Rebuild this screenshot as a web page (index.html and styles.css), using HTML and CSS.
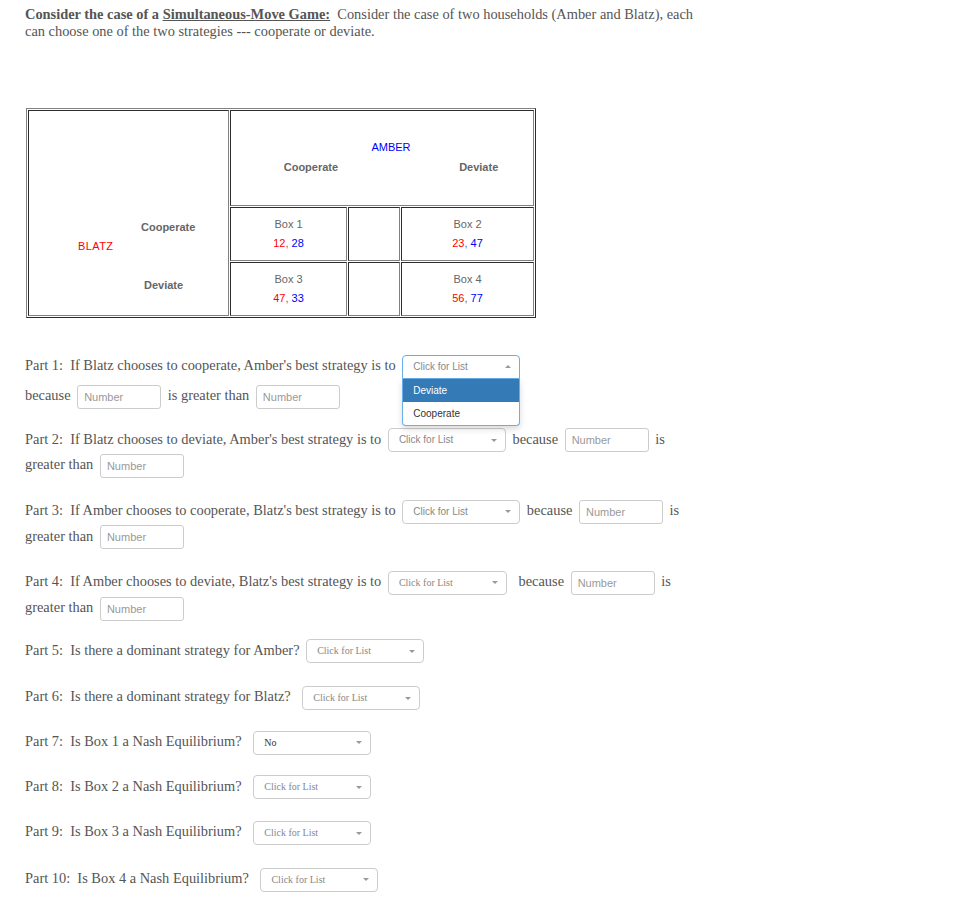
FILE: index.html
```html
<!DOCTYPE html>
<html>
<head>
<meta charset="utf-8">
<title>Simultaneous-Move Game</title>
<link rel="stylesheet" href="styles.css">
</head>
<body>
<div class="page">
  <p class="intro"><b>Consider the case of a <u>Simultaneous-Move Game:</u></b>&nbsp; Consider the case of two households (Amber and Blatz), each can choose one of the two strategies --- cooperate or deviate.</p>

  <table class="game">
    <tr>
      <td class="side" rowspan="3">
        <div class="lab coop">Cooperate</div>
        <div class="blatz">BLATZ</div>
        <div class="lab dev">Deviate</div>
      </td>
      <td class="top" colspan="3">
        <div class="amber">AMBER</div>
        <div class="cols"><span class="lab">Cooperate</span><span class="lab">Deviate</span></div>
      </td>
    </tr>
    <tr>
      <td class="box c1">Box 1<br><span class="r">12</span>, <span class="b">28</span></td>
      <td class="box c2"></td>
      <td class="box c3">Box 2<br><span class="r">23</span>, <span class="b">47</span></td>
    </tr>
    <tr>
      <td class="box c1">Box 3<br><span class="r">47</span>, <span class="b">33</span></td>
      <td class="box c2"></td>
      <td class="box c3">Box 4<br><span class="r">56</span>, <span class="b">77</span></td>
    </tr>
  </table>

  <p class="part p1">Part 1:&nbsp; If Blatz chooses to cooperate, Amber's best strategy is to <span class="sel-wrap"><span class="sel open"><span>Click for List</span><span class="caret up"></span></span><span class="menu"><span class="opt active">Deviate</span><span class="opt">Cooperate</span></span></span><br>because <input class="num" placeholder="Number"> is greater than <input class="num" placeholder="Number"></p>

  <p class="part">Part 2:&nbsp; If Blatz chooses to deviate, Amber's best strategy is to <span class="sel"><span>Click for List</span><span class="caret"></span></span> because <input class="num" placeholder="Number"> is greater than <input class="num" placeholder="Number"></p>

  <p class="part">Part 3:&nbsp; If Amber chooses to cooperate, Blatz's best strategy is to <span class="sel"><span>Click for List</span><span class="caret"></span></span> because <input class="num" placeholder="Number"> is greater than <input class="num" placeholder="Number"></p>

  <p class="part p4">Part 4:&nbsp; If Amber chooses to deviate, Blatz's best strategy is to <span class="sel serif spaced"><span>Click for List</span><span class="caret"></span></span> because <input class="num" placeholder="Number"> is greater than <input class="num" placeholder="Number"></p>

  <p class="part p5">Part 5:&nbsp; Is there a dominant strategy for Amber? <span class="sel serif"><span>Click for List</span><span class="caret"></span></span></p>

  <p class="part p6">Part 6:&nbsp; Is there a dominant strategy for Blatz? <span class="sel serif wide"><span>Click for List</span><span class="caret"></span></span></p>

  <p class="part p7">Part 7:&nbsp; Is Box 1 a Nash Equilibrium? <span class="sel serif wide chosen"><span>No</span><span class="caret"></span></span></p>

  <p class="part">Part 8:&nbsp; Is Box 2 a Nash Equilibrium? <span class="sel serif wide"><span>Click for List</span><span class="caret"></span></span></p>

  <p class="part p9">Part 9:&nbsp; Is Box 3 a Nash Equilibrium? <span class="sel serif wide"><span>Click for List</span><span class="caret"></span></span></p>

  <p class="part">Part 10:&nbsp; Is Box 4 a Nash Equilibrium? <span class="sel serif wide"><span>Click for List</span><span class="caret"></span></span></p>
</div>
</body>
</html>
```

FILE: styles.css
```css
html, body {
  margin: 0;
  padding: 0;
  background: #fff;
}

.page {
  width: 675px;
  padding: 6px 0 0 25px;
  font-family: "Liberation Serif", "Times New Roman", serif;
  font-size: 14.4px;
  color: #555;
}

.intro {
  margin: 0;
  line-height: 17px;
}

/* payoff table */
.game {
  margin: 68px 0 32px 1px;
  border: 1px outset gray;
  border-spacing: 1px;
  font-family: "Liberation Sans", Arial, sans-serif;
  font-size: 11px;
  color: #666;
}

.game td {
  box-sizing: border-box;
  border: 1px inset gray;
  padding: 0;
}

.side {
  width: 201px;
  vertical-align: top;
  padding-top: 107px !important;
  line-height: 19px;
}

.lab {
  font-weight: bold;
}

.coop {
  padding-left: 112px;
}

.blatz {
  padding-left: 49px;
  color: #f00;
  letter-spacing: 0.4px;
}

.dev {
  margin-top: 20px;
  padding-left: 115px;
}

.top {
  height: 96px;
  padding: 0 0 2px 18px !important;
  text-align: center;
  vertical-align: middle;
  line-height: 20px;
}

.amber {
  color: #00f;
}

.cols {
  display: flex;
  justify-content: center;
  gap: 121px;
}

.box {
  height: 54px;
  text-align: center;
  vertical-align: middle;
  line-height: 19px;
}

.c1 { width: 117px; }
.c2 { width: 52px; }
.c3 { width: 133px; }

.r { color: #f00; }
.b { color: #00f; }

/* questions */
.part {
  margin: 0 0 20px;
  line-height: 25px;
}

.p1 {
  line-height: 30px;
  margin-bottom: 16.5px;
}

.p4 {
  margin-bottom: 17px;
}

.p5 {
  margin-bottom: 21px;
}

.p6,
.p7 {
  margin-bottom: 19px;
}

.p9 {
  margin-bottom: 21px;
}

.sel,
.sel-wrap {
  display: inline-flex;
  vertical-align: middle;
  margin: 0 3px;
}

.sel.wide {
  margin-left: 8px;
}

.sel.spaced {
  width: 119px;
  margin-right: 8px;
}

.sel-wrap {
  position: relative;
}

.sel-wrap .sel {
  margin: 0;
}

.sel {
  box-sizing: border-box;
  width: 118px;
  height: 24px;
  padding: 0 8px 0 10px;
  align-items: center;
  justify-content: space-between;
  border: 1px solid #ccc;
  border-radius: 4px;
  background: #fff;
  font-family: "Liberation Sans", Arial, sans-serif;
  font-size: 10px;
  line-height: 12px;
  color: #888;
}

.sel.serif {
  font-family: "Liberation Serif", "Times New Roman", serif;
}

.sel.chosen {
  color: #333;
}

.caret {
  width: 0;
  height: 0;
  border-left: 3px solid transparent;
  border-right: 3px solid transparent;
  border-top: 3px solid #999;
}

.caret.up {
  border-top: 0;
  border-bottom: 3px solid #999;
}

.sel.open {
  border-color: #66afe9;
  border-radius: 4px 4px 0 0;
}

.menu {
  position: absolute;
  left: 0;
  top: 100%;
  width: 100%;
  box-sizing: border-box;
  display: flex;
  flex-direction: column;
  border: 1px solid #66afe9;
  border-top: 0;
  border-radius: 0 0 4px 4px;
  background: #fff;
  box-shadow: 0 3px 6px rgba(0, 0, 0, 0.15);
  z-index: 2;
  font-family: "Liberation Sans", Arial, sans-serif;
  font-size: 10px;
}

.opt {
  height: 23px;
  line-height: 23px;
  padding-left: 10px;
  color: #333;
}

.opt.active {
  background: #337ab7;
  color: #fff;
}

.num {
  box-sizing: border-box;
  width: 84px;
  height: 24px;
  margin: 0 3px;
  padding: 0 6px;
  border: 1px solid #ccc;
  border-radius: 3px;
  vertical-align: middle;
  font-family: "Liberation Sans", Arial, sans-serif;
  font-size: 11px;
  color: #555;
  background: #fff;
}

.num::placeholder {
  color: #999;
}
```
